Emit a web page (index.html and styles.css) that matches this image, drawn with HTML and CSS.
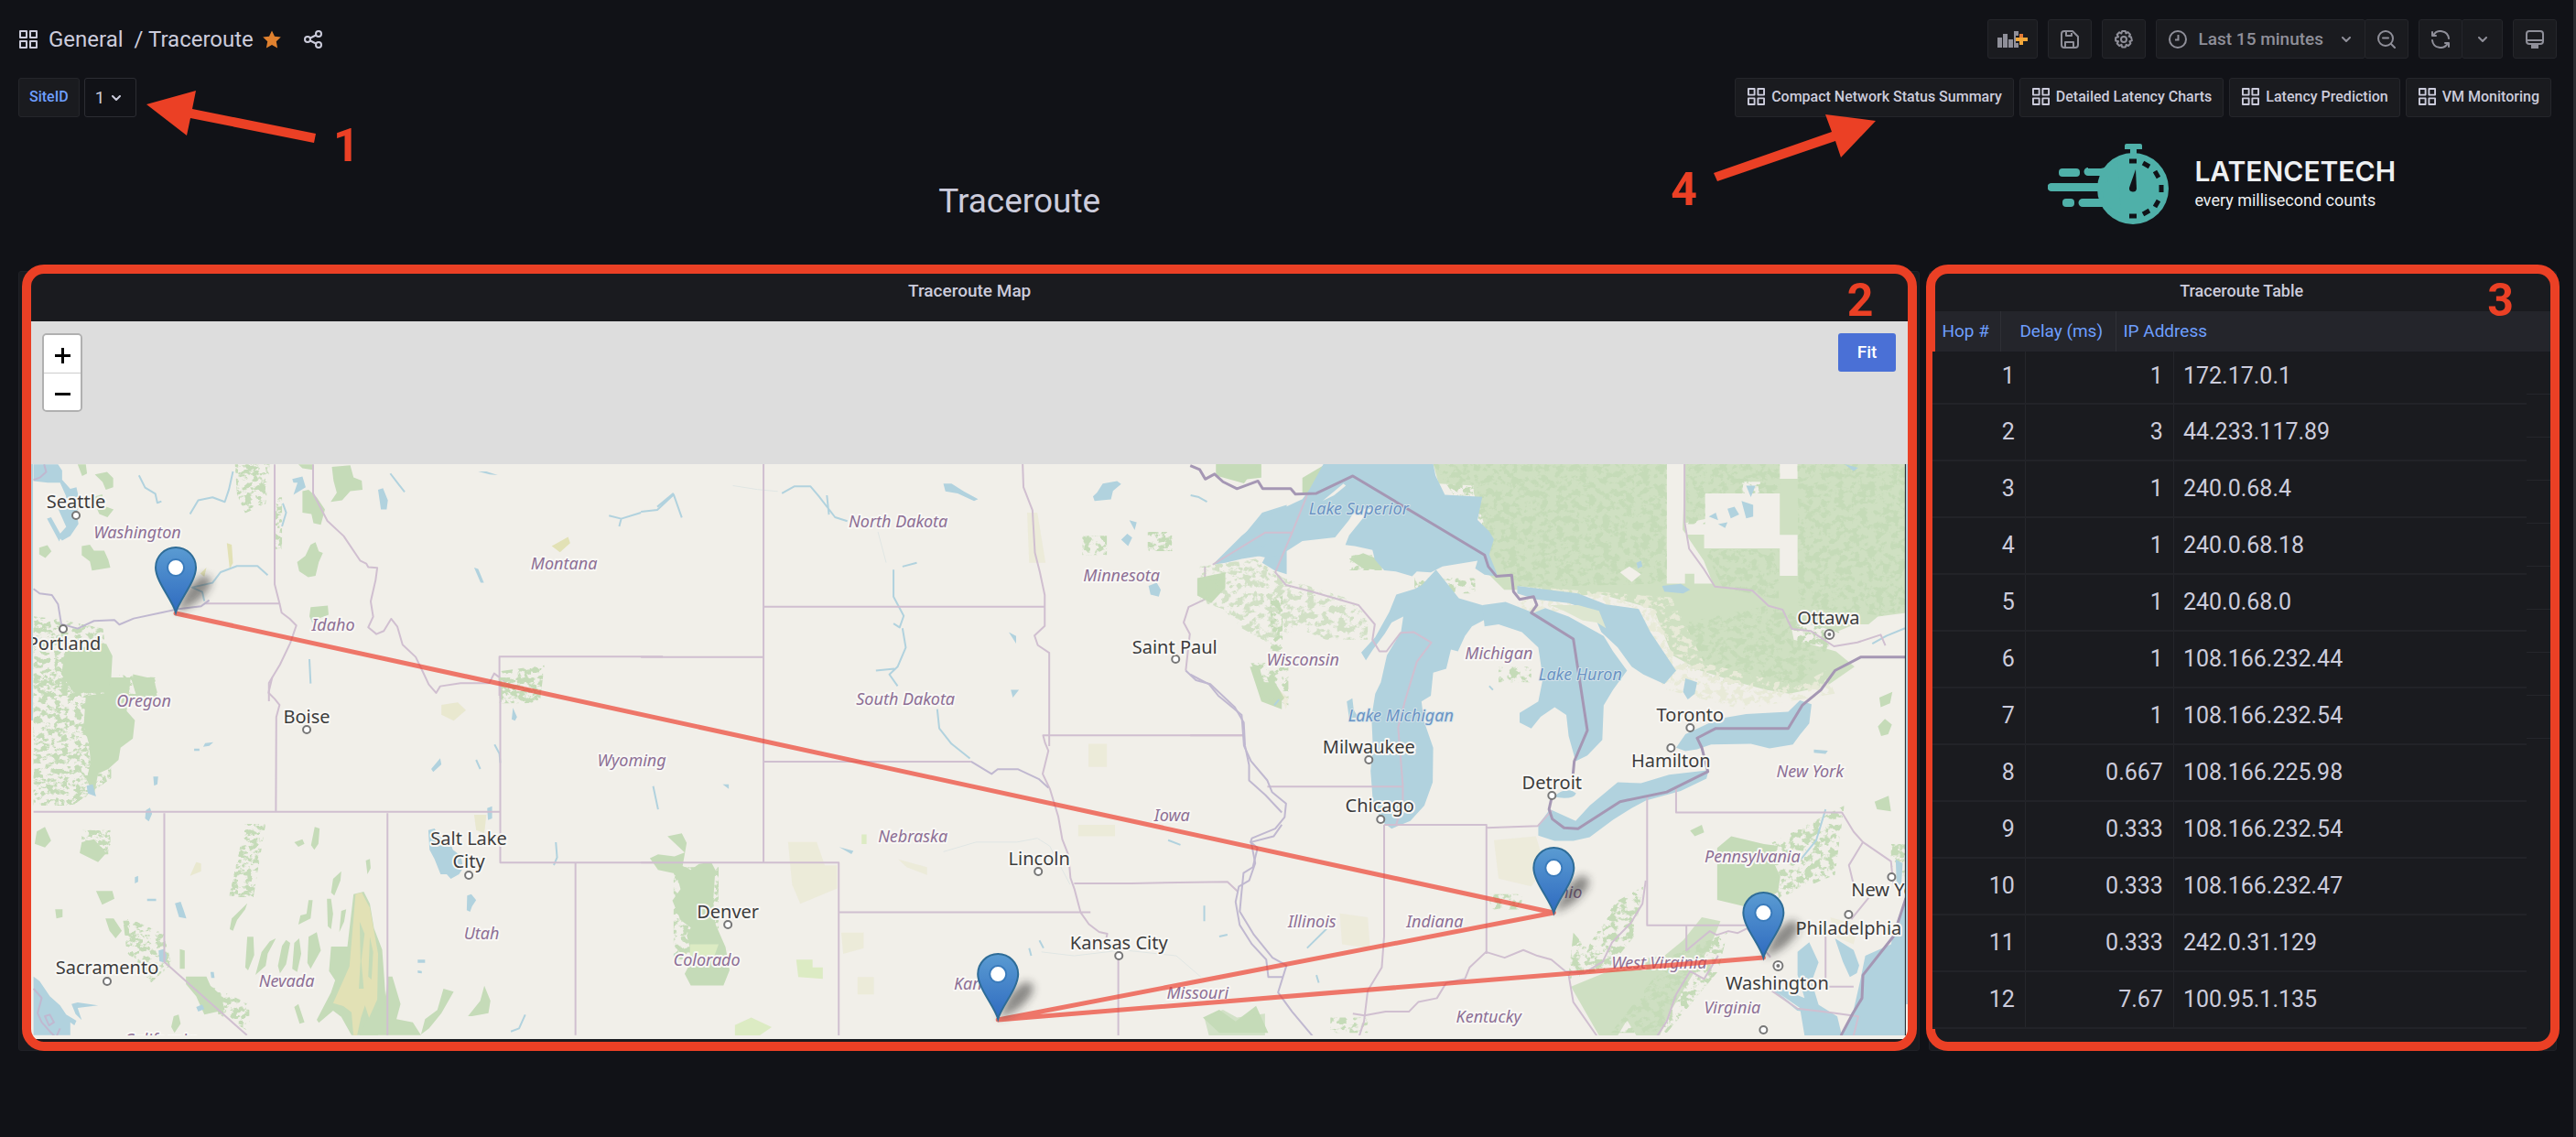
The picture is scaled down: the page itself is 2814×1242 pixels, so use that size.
FILE: index.html
```html
<!DOCTYPE html>
<html lang="en">
<head>
    <meta charset="UTF-8">
    <title>General / Traceroute</title>
    <link rel="stylesheet" href="styles.css">
</head>
<body>
    <svg class="defs" width="0" height="0" aria-hidden="true">
        <symbol id="apps" viewBox="0 0 20 20">
            <path d="M1 1h7v7H1zM12 1h7v7h-7zM1 12h7v7H1zM12 12h7v7h-7z" fill="none" stroke="currentColor" stroke-width="2" stroke-linejoin="round"/>
        </symbol>
        <symbol id="chevron" viewBox="0 0 10 6">
            <path d="M1 1l4 4 4-4" fill="none" stroke="currentColor" stroke-width="2" stroke-linecap="round" stroke-linejoin="round"/>
        </symbol>
    </svg>

    <header class="topbar">
        <nav class="breadcrumb">
            <svg class="icon" aria-hidden="true"><use href="#apps"/></svg>
            <a href="#">General</a>
            <a href="#" class="current">/ Traceroute</a>
            <button class="bare star" aria-label="Unmark favorite">
                <svg class="icon" viewBox="0 0 20 20"><path d="M10 0.5l3 6.2 6.8.9-5 4.7 1.3 7.2L10 16l-6.1 3.5 1.3-7.2-5-4.7L7 6.700z" fill="#e0812f"/></svg>
            </button>
            <button class="bare share" aria-label="Share dashboard">
                <svg class="icon" viewBox="0 0 20 20"><g fill="none" stroke="currentColor" stroke-width="2"><circle cx="4" cy="10" r="3"/><circle cx="16" cy="4" r="3"/><circle cx="16" cy="16" r="3"/><path d="M7 8.500l6-3M7 11.500l6 3"/></g></svg>
            </button>
        </nav>
        <div class="tools">
            <button class="tool add" aria-label="Add panel">
                <svg width="33" height="20" viewBox="0 0 33 20">
                    <path d="M0 8h5v11H0zM6 4h5v15H6zM12 10h5v9h-5zM18 1h5v5h-3v8h3v5h-5z" fill="#8f8f99"/>
                    <path d="M24 4h4v4h5v4h-5v4h-4v-4h-4V8h4z" fill="#f2a83b"/>
                    <path d="M24 4h4v4h-4z" fill="#e47a35"/>
                </svg>
            </button>
            <button class="tool" aria-label="Save dashboard">
                <svg class="icon" viewBox="0 0 20 20"><path d="M4 1h9l6 6v9a3 3 0 0 1-3 3H4a3 3 0 0 1-3-3V4a3 3 0 0 1 3-3zM6 1v5h6V3M5 19v-6h9v6" fill="none" stroke="currentColor" stroke-width="2" stroke-linejoin="round"/></svg>
            </button>
            <button class="tool" aria-label="Dashboard settings">
                <svg class="icon" viewBox="0 0 20 20"><g fill="none" stroke="currentColor" stroke-width="2" stroke-linejoin="round"><path d="M8.200 1h3.600l.6 2.400 2.100-1.300 2.500 2.500-1.300 2.100 2.300.8.9 3.900-2.500.8 1 2.300-2.500 2.500-2.200-1.200-.9 2.700H8.200l-.7-2.700-2.300 1.200-2.500-2.500L4 12.200l-2.900-.6V8.100L4 7.300 2.700 4.800l2.500-2.500 2.200 1.200z"/><circle cx="10" cy="10" r="3"/></g></svg>
            </button>
            <div class="group">
                <button class="tool time">
                    <svg class="icon" viewBox="0 0 20 20"><g fill="none" stroke="currentColor" stroke-width="2"><circle cx="10" cy="10" r="9"/><path d="M10.500 5v5.500H7"/></g></svg>
                    <span>Last 15 minutes</span>
                    <svg class="chevron" aria-hidden="true"><use href="#chevron"/></svg>
                </button>
                <button class="tool" aria-label="Zoom out time range">
                    <svg class="icon" viewBox="0 0 20 20"><g fill="none" stroke="currentColor" stroke-width="2" stroke-linecap="round"><circle cx="9" cy="9" r="8"/><path d="M15 15l4 4M6 8.500h6"/></g></svg>
                </button>
            </div>
            <div class="group">
                <button class="tool" aria-label="Refresh">
                    <svg class="icon" viewBox="0 0 20 20"><path d="M1 2v4h4M2 6a9 9 0 0 1 17 3M19 18v-4h-4M18 14A9 9 0 0 1 1 11" fill="none" stroke="currentColor" stroke-width="2" stroke-linecap="round" stroke-linejoin="round"/></svg>
                </button>
                <button class="tool narrow" aria-label="Refresh interval">
                    <svg class="chevron"><use href="#chevron"/></svg>
                </button>
            </div>
            <button class="tool" aria-label="Cycle view mode">
                <svg class="icon" viewBox="0 0 20 20"><path d="M4 1h12a3 3 0 0 1 3 3v8a3 3 0 0 1-3 3H4a3 3 0 0 1-3-3V4a3 3 0 0 1 3-3zM1 11h18M7 15v2M13 15v2M6 19h8M6 17h8" fill="none" stroke="currentColor" stroke-width="2" stroke-linejoin="round"/></svg>
            </button>
        </div>
    </header>

    <div class="submenu">
        <div class="variable">
            <label for="site">SiteID</label>
            <div class="picker">
                <select id="site"><option>1</option></select>
                <svg class="chevron" aria-hidden="true"><use href="#chevron"/></svg>
            </div>
        </div>
        <nav class="links">
            <a href="#"><svg class="icon" aria-hidden="true"><use href="#apps"/></svg>Compact Network Status Summary</a>
            <a href="#"><svg class="icon" aria-hidden="true"><use href="#apps"/></svg>Detailed Latency Charts</a>
            <a href="#"><svg class="icon" aria-hidden="true"><use href="#apps"/></svg>Latency Prediction</a>
            <a href="#"><svg class="icon" aria-hidden="true"><use href="#apps"/></svg>VM Monitoring</a>
        </nav>
    </div>

    <section class="banner">
        <h1>Traceroute</h1>
        <div class="brand">
            <!-- stopwatch with speed lines -->
            <svg width="132" height="89" viewBox="0 0 132 89" aria-hidden="true">
                <g fill="#4fb0a9">
                    <path d="M86 0h15a2 2 0 0 1 2 2v4h-6v6h-7V6h-6V2a2 2 0 0 1 2-2z"/>
                    <circle cx="93" cy="49" r="39"/>
                    <path d="M44 27h14q8-1 18-10l4 60q-10-8-20-8H38a4 4 0 0 1 0-9h19a4 4 0 0 0 0-8H4a4 4 0 0 1 0-9h58a4 4 0 0 0 0-8H44a4 4 0 0 1 0-9z"/>
                    <rect x="12" y="27" width="23" height="9" rx="4"/>
                    <rect x="16" y="60" width="13" height="9" rx="4"/>
                </g>
                <path d="M96 28l-7 20a4 4 0 0 0 8 1z" fill="#111217"/>
                <g fill="none" stroke="#111217" stroke-width="5">
                    <path d="M89 19h8M104 21l7 4M117 30l4 7M124 45v8M121 62l-4 7M111 73l-7 4M97 79h-8"/>
                </g>
            </svg>
            <div class="brand-text">
                <strong>LATENCETECH</strong>
                <span>every millisecond counts</span>
            </div>
        </div>
    </section>

    <main class="panels">
        <section class="panel map-panel">
            <h2>Traceroute Map</h2>
            <div class="map">
                <svg class="tiles" viewBox="34 351 2050 784" preserveAspectRatio="xMidYMid slice" role="img" aria-label="Map of traceroute hops">
                    <defs>
                        <filter id="speckle" x="0" y="0" width="1" height="1">
                            <feTurbulence type="fractalNoise" baseFrequency="0.060" numOctaves="4" seed="4" result="n"/>
                            <feColorMatrix in="n" values="0 0 0 0 0  0 0 0 0 0  0 0 0 0 0  9 0 0 0 -4.300" result="m"/>
                            <feComposite in="SourceGraphic" in2="m" operator="in"/>
                        </filter>
                        <filter id="soft" x="-50%" y="-50%" width="200%" height="200%"><feGaussianBlur stdDeviation="5"/></filter>
                        <linearGradient id="pin-fill" x1="0" y1="0" x2="0" y2="1">
                            <stop offset="0" stop-color="#5a9bd2"/>
                            <stop offset="1" stop-color="#2f6bc0"/>
                        </linearGradient>
                        <clipPath id="tile-area"><path d="M36 507h2045v624H36z"/></clipPath>
                        <g id="pin">
                            <path d="M0 0L14-28 28-40q12-2 10 10Q28-10 0 0z" fill="#222" opacity=".5" filter="url(#soft)"/>
                            <path d="M0 0C-4-14-22-34-22-49a22 22 0 0 1 44 0C22-34 4-14 0 0z" fill="url(#pin-fill)" stroke="#2e6c97" stroke-width="2"/>
                            <circle cy="-49" r="9" fill="#fff" stroke="#3a7bbb" stroke-width="2"/>
                        </g>
                    </defs>
                    <path d="M34 351h2050v156H34z" fill="#ddd"/>
                    <path d="M34 507h2050v628H34z" fill="#f1efe9"/>
                    <path d="M34 507h2v280h-2zM2081 507h3v590h-3z" fill="#b1d2de"/>
                    <g clip-path="url(#tile-area)">
                        <!-- northwest -->
                        <g transform="translate(0 280) scale(.4464 .3333)">
                            <g class="wood">
                                <path d="M730 682h35v18l-25-5zM812 690l45-5 8 40 20 10 2 30-30 5-20 30-28 5 15-30-8-40zM740 770l15-5 20 25 20 40-10 50-18-5-5-30-22-5zM760 945l12-8 8 30 10 5-10 30-8 45-18 5-22-20-5-30 20-20zM760 1150l42-5 2 30-30 15 8 12-15 8-10-30z"/>
                                <path d="M96 955l20-8 10 20-15 22-15-12zM200 950l20-5 10 20 25 0 10 30 5 25-45 10-5-30-20-20zM232 715l30-8 15 20 0 30-18 8-8-25zM225 790l25-10 8 40 20 10-15 25-20-10zM190 682h20l3 30-12 8z"/>
                                <path d="M160 1290l100-20 15 40-5 120H180l-30-60zM325 1370l50 15 10 60-50-10z"/>
                            </g>
                            <path class="wood" filter="url(#speckle)" d="M575 682h85l-10 130-50 30-20-60zM82 1180l60 10 110 30 20 220H82zM270 1370l110 10v70l-100-10z"/>
                            <path class="wood" filter="url(#speckle)" d="M1222 1360l110-20-10 110h-100zM670 790h20v170h-20z"/>
                            <path class="crop" d="M555 940l12 5 3 60-8 20zM490 1040l15-20-5 30zM1350 950l40-30 5 20-25 30z"/>
                            <path class="water" d="M82 682h60l10 20 0 30 20 30 15-5 10 60-10 20 5 40-20 40-20 15-10-15 20-30-20-60 20-40-15-45-30 0-35-5zM115 860l10-5 25 60-5 20zM925 765l12-5 12 40-3 30-14 0zM715 730l25-8 8 35-30 25 10-40-10 0zM1160 1020l10 5 14 45-8 0zM1170 705l20 0 28 12-20-2z"/>
                            <path class="river" d="M340 718l15 40 25 20 5 30 10-5M465 845l20-45 35-10 30 15 10-40 10-60M955 712l20 35 15 25M690 885l10-45-8-30M500 1130l-5-30-25-15 50-15 20-35 40-20 50 0 25 30M757 1320l3 80M1490 850l30 10 48-20M1515 885l5-25"/>
                            <path class="state" d="M672 682v393l12 63H500M684 1138l5 30 20 20 16 22-15 58-25 70-27 60v60M766 682v95l35 90 40 50 40 80 15 10 5 12 22 2-4 40-12 70 6 50-12 35 20 22 18-10 18-40 15 25 13 60 32 40 18 50 14 40 18 28 10-22 50-10 70 0 12-32 30 30M1222 1440V1312h400"/>
                            <path class="river-line" d="M82 1090l15 15 30 5 15 30 8 65 40 15 40-25 50-3 12 15 35-20 70-20 35-10 60-10 20-20M108 682l5 25-15 18-16 8"/>
                        </g>
                        <!-- southwest -->
                        <g transform="translate(0 740) scale(.4464 .3333)">
                            <g class="wood">
                                <path d="M210 60l55-10 5-50h50l-10 110 20 30-5 60-30 30-5 40-25 30-25 15-10 70-18-50 10-60-5-60-12-60zM320 0h55l10 50-50 15zM90 505l20-15 15 45-15 22-25-12zM200 540l30-10 30 45-20 30-45-30zM235 700h40l5 25-30 20zM258 790l20 0 20 40-15 25-15-25zM135 760l18 0 0 25-15 5z"/>
                                <path d="M770 490l12 5-3 50-10 20-8-15zM720 540l20-10 5 15-15 10zM895 600l10-5 2 30-8 20zM815 660l20-25-2 30-15 50-8-10zM605 740l-5 20-20 35-10 35-8-5 5-35zM800 725l10 0 5 50-5 50-8-10zM835 765l12-5-5 40-12 35zM755 730l10 0-5 60-30 20 5-30 15-5z"/>
                                <path d="M865 710l25-8 15 40 10 80 20 70 5 90 5 100-20 90H860l-25-60-20-20-35 40-5-10 35-90 10-40-15-30 5-80 40 0z"/>
                                <path d="M605 850l15 0 2 60-15 50-7-10zM640 900l20-35 15-10-20 50-5 40-25 30zM690 880l10-20 10 10-10 70-15 30-5-25zM720 870l12-15 5 50-10 60-12-10zM755 850l20-15 10 60-25 60-8-20zM720 1080l10-10 15 60-12 5zM950 980l10 0 20 90-10 50 40 10 20 42H880l20-60 40-40zM1085 1020l25 10-30 70-30 50-20 20 10-50 30-30zM1145 1110l30-50 10-50 15 50-5 40-40 10zM440 890l12 5 0 60-12 0zM455 980l30 0 20 0 10 30 25 30 10 50-50 15-20-60-25-40zM425 1110l12-5 5 30-15 30-8-20z"/>
                            </g>
                            <path class="wood" filter="url(#speckle)" d="M82 0h190v330l-90 90H82zM200 500h70v80h-70zM300 780l100 60 20 100-50 60-60-100zM480 990l130 80v90l-80-60zM600 480h50l-30 240h-60zM1222 0h95v85h-95z"/>
                            <path class="crop" d="M870 710l15-5 20 50 20 150-2 150-20 60-10-40-10 40-10 62h-8l-5-80-20-20-25-10 40-120z"/>
                            <path class="wood" d="M880 800l12 40-8 90 6 90-12 0 4-90zM905 850l8 50-4 90-8-10z"/>
                            <path class="crop" opacity=".5" d="M465 650l15-45 12 5 0 25zM1080 90l40-8 20 25-30 35-30-20zM1160 450l30 0-5 60-20-10z"/>
                            <path class="water" d="M1048 500l15-5 15 30 20 0 10 40 20 20 5 40-10 20-20 15-10-15-15 0-15-50-12-30zM388 895l12-5 8 20-3 25-15-5zM82 980l15 15 25 50 25 30 15 30 25 20-5 15-10-10v42H82zM428 740l14-5 8 30 6 25-18-5zM357 435l10-8 5 20-8 25-9-10zM1192 428l12-6v40l-10 5zM375 325h12l-2 25-8 5zM1055 300l22-35 3 20-20 25zM212 355l15-5 8 40-20-10zM1143 715l10-5 12 20-10 20-5 18-8-5zM175 1070l15-5 50 10-50 8 10 40-15-20zM480 1080l15-8 5 15-15 8zM360 725h22v8h-22zM502 215l20-3-10 12-15 3zM475 233h13v8h-13zM1255 100l10 30-5 12-8-5zM1022 925h18v10h-18zM1022 960l10 2v8l-10-2zM330 655l8-5 0 20-8 5zM515 965l8 0 2 20-8 0z"/>
                            <path class="river" d="M1250 1160l20-10 15-45M1360 540l3 50-8 25M1210 220l12 30 2 30M1165 270l10 30"/>
                            <path class="state" d="M666 0l-9 50 15 20 12 20-8 40-1 310M82 440h1140M1224 20v587h400M402 445v487l202 240M948 445v727M1408 607v565"/>
                            <path class="river-line" d="M82 1020l20 30-10 50 10 30 20 30 15 20 10-30M110 1110l10 30 12-10-10-25z"/>
                        </g>
                        <!-- plains -->
                        <g transform="translate(700 480) scale(.4464 .4209)">
                            <g class="wood">
                                <path d="M65 1030l35-8 12 25-10 60 20 10 20-15 30-5 10 20-5 80 5 60 25 60 10 60-15 40-80 0-15-30 20-40-15-60 10-20-25-20-20-50 20-30-10-40-45-10-20-30 20-10 40 5 25-10zM1408 64h110v35l-40 5-70-15zM1490 590l20 0 15 40 25 10 18 30v30l-50-20zM1375 1500l40-20 40 30 50-40 30 70h-120z"/>
                            </g>
                            <path class="wood" filter="url(#speckle)" d="M1080 250h60v50h-60zM1240 240h60v50h-60zM80 1110h110v240H80zM1540 400h30v150h-30z"/>
                            <path fill="#dcebc3" d="M380 1350h40v20h25v30l-60-5zM230 1520l40-20 50 25-30 22h-60zM120 1310h70l-10 30h-60zM540 1025h12v25h-12z"/>
                            <path class="crop" opacity=".3" d="M360 1045l70 0 20 60 30 0v60l-90 40-20-50zM1095 790h45v60h-45zM1070 1000h90v30h-90zM490 1280h55v40l-50 15zM530 1395h40v45h-40zM945 190h25l20 130h-40zM630 1090l70 20v20l-50-20z"/>
                            <path class="water" d="M1130 115l35-7 10 8-20 18-5 22-40 4-4-12 10-10zM1242 380l20-8 10 18-5 18-20-5zM1175 260l15-15 12 10-10 22zM1195 210l18 5-5 20zM740 115l20 0 30 20 35 20-10 5-40-20-30-5zM1400 325L1470 255 1520 190l60-20v180l-30-10-30-20 10-20-60 10-40 10zM200 895h15l0 12zM485 1058l35 10-5 8zM900 500l18 10 0 20zM905 650l20 0-15 20z"/>
                            <path class="river" d="M345 140l30-18 40 0 20 25 40 55 30 10M455 145l5 50M0 188l40-5 40-40 20 60M80 140l-40 35M618 338l0 70 25 50-10 30-15-10M640 490l8 50-20 50-20 20 20 30M575 600l45-5M725 700l5 50 30 40 45 38M30 900l12 60M640 330l35-10M1345 145l20 5 20 12M1290 1040l30 12M950 1320l5 20M975 1300l10 20M1415 1290l20-5"/>
                            <path class="thin-river" d="M225 120l60 10 50 5M580 240l20 80M740 1070l80-25 100 0 50-10 30 20 50 100M980 1330l80 10 120-15 130 15 60 55"/>
                            <path class="state" d="M300 64v1034M300 434h686M0 565h300M300 836h508M0 1098h484v449M484 1227h616M934 64l2 60 22 60 6 110 12 50 12 60 0 80-25 25 8 25 28 20v242M1476 768H984l5 20 8 20-14 60 18 40 20 70 10 60 15 40 5 60 10 30 15 60 20 30 25 20 20 5-3 15-15 20M1060 1152h140l235-4 25 25M1168 1340v207M1380 330v85l-40 20-12 40 15 30-10 95"/>
                            <path class="river-line" d="M808 836l50 32 15-12 50 0 50 25 24 23M1333 600l25 25 35 10 60 60 22 40 3 60 10 50 0 40 40 38 40 45M1568 1000l-20 30-55 15 10 55-15 45-25 15-8 40 10 60 30 50 35 40 5 45 35 0"/>
                        </g>
                        <!-- great lakes and the east -->
                        <g transform="translate(1300 480) scale(.5102 .4209)">
                            <path fill="#cfe0c2" d="M520 64h1012v386l-60 10-20 20-30 0-40 20-60-25-35 15 5 30 90 30 40 40-60 50-80 20-50-10-60-20-80-30-60-40-40-120-60-20-60-20-60 10-80-20-60 0-50-60-10-60 20-40-25-90 0-20-75-5z"/>
                            <path fill="#f1efe9" d="M1020 64h38v40l-4 130 45 80 20 60h-40v-25h-20v25h-39v-120zM1102 140h80v-30h38v30h42v108h38v106h-38v-71h-162v-36h-40v-30l42-10zM1262 64h38v38h-38z"/>
                            <path class="wood" filter="url(#speckle)" d="M520 64h500v310l-320 10-60-100zM1062 64h200v76h-160v80h-40zM1300 64h232v400l-230-30zM1100 285h160v130l-120-30zM1040 480l200-50 150 70-80 130-150 10-120-60z"/>
                            <path fill="#e8ead8" filter="url(#speckle)" d="M700 380l330 30 70 170 200 60 60-40 20 60-200 40-160-50-60-90-80-130-180 30z"/>
                            <path fill="#f1efe9" d="M920 345l20-15 25 20-20 20z"/>
                            <g class="wood">
                                <path d="M55 64h90l-30 50-60-20zM240 100l50-36-10 80-40-5zM130 580l18 10 8 40 25 0 20 40-30 10-20-30-10-40zM15 360l60-15 0 40-30 40-30-20zM340 310l30-15 40 20 0 25-40-5zM1128 1060l30-30 70 20 30 5-10 40 15 40-5 40-60 40-70-20zM1475 670l28-15-5 30-20 10zM1472 745l15-20 15 15-8 25-15 5zM1465 940l30-15 5 40-30-5zM1070 1015l25-15 5 20-20 10z"/>
                                <path opacity=".8" d="M815 1420l80-40 60-30 60-10 40-40 40-60 40 10-20 60-60 120-30 60-20 57h-50l-20-40-20 40h-40z"/>
                                <path d="M30 1500l40-20 30 20 60-10v57H40z" opacity=".7"/>
                            </g>
                            <path class="wood" opacity=".7" filter="url(#speckle)" d="M20 330l120-20 60 50 130 50 50 50 0 60-90 0-60-30-60 40-60-40-40-50-50-20z"/>
                            <path class="wood" filter="url(#speckle)" d="M130 580h80v110l-60-30zM340 300h70v40h-70zM480 360h130v40h-130zM1240 1050l160-100-20 180-120 60zM910 1200l60-40-20 130-60 90-80 20zM1030 1340l120-60-20 100-110 160h-120zM640 1180h70v40h-70zM820 1280l50 70-60 40zM660 590h70v40h-70zM300 1500h80v40h-80zM1500 1050h30v90h-30z"/>
                            <path class="crop" opacity=".25" d="M650 1040l90-10 20 80-30 50-70-20zM320 1230l60 10 5 80-60-10zM190 650l20 20-5 30zM1370 1240l60 20-10 50-40-20z"/>
                            <path class="water" d="M48 325l62-75 50-50 80-45 15-25 30-66h235l5 30 20 50 80 5-10 60 25 30 10 20-10 40 15 45 3 12-28-5-20-16 5-20-75 15-25 15-30-2-10 12-35-12-25-3-20-28-5-25-38-10-20-3 8-25 40-60 20-5-25-5-25 10-10 20-30 45-70 10-45 35-32 8-20-5 20-30z"/>
                            <path fill="#f1efe9" d="M283 160l45-45 5 5-25 25z"/>
                            <path class="water" d="M575 412l50 18 18 30-40 25-15 25-15 40-15-5-10 50-28 10-5 60-20 15 5 50 20 70-1 90-18 60-30 40-40 20-22-20-18-50-5-80 5-60-3-80 8-60 12-30 13-70 30-60 5-40-25 15-15 30-25 40-15 28-10-20 30-40 30-65 15-45 40-15 15-10 30-40z"/>
                            <path class="water" d="M625 430l50-8 60 28 25-12 50 22 45 30 30 20 20 40 30 50-30 50-20 40-3 90-32 40-25 15-15-65-5-55-25-20-30 25-20 30-25-15 0-25 40-30 10-60-10-80-35-40-50-20-30 5zM700 380l130 20 60 28 70 12 25 60 55 100-25 35-45-25-25-20-30-50-35-40-20-55-50-20-70-10-40-15z"/>
                            <path class="water" d="M1060 620l25 10-5 30-15 15-10-20zM1010 380l40-5 20 15-15 10-40-5z"/>
                            <path fill="#dde6d0" d="M770 430l60 0 45 15 15 45-20-15-30-5-40-25z"/>
                            <path class="water" d="M745 1000l25-40 55 30 30-40 60-60 50 2 60-22 85-12-5 22-55 32-75 25-30 20-40 30-50 45-35 10-40 0-35-14zM778 928q25-30 48-10-5 18-48 10zM1040 800l20-35 70-40 60-12 90-6 25-30 25 10-5 50-20 30-15 25-50 10-40-12-85 2-30 12-25 5zM1335 805l30 3-5 8-25-3z"/>
                            <path class="water" d="M1532 1190l-22 70-10 50-55 30-10 60-15 80-25 67h137zM1380 1295l40 30 12 40-5 20-15 10-15-40zM1325 1305l-25 25 0 60 15 60-30-15-30-20-10 10 60 50 10 72h80l-10-50-40-30-15-60 15-50zM1510 1090l15 10-3 60-10-10z"/>
                            <path class="water" d="M335 680l12-8 3 30 10 20-20 0zM955 320l10-5 3 15-10 5zM1110 200l15-10 5 20zM1190 120l20 0-10 30zM1150 180l15-5 10 20-18 10zM1180 160l25 10 0 30-15 5zM1130 220l20-5-5 15zM1400 64l30 10-10 8z"/>
                            <path class="river" d="M270 1390l5 20M30 1210l0 40M1460 530l30-20 40-20M1240 1420l60 60 60 10M180 690l10-15M640 640l8 10M1300 1100l40-60 20-80M300 1260l-50 60"/>
                            <path class="state" d="M48 325L160 242h58l32-97M218 242l-36 103 23 33 55 17 100 35 35 50-5 40 15 30h15l30-48 28-2 38 27-31 50-25 100-15 70 10 151v45l-15 60M165 901h290M0 768h115M415 1000v290l-5 80-30 60-8 80-10 37M415 1000h219v335M634 1008l110-5 30-40M978 925v336h287M1040 905v63h355l25 50 20 27-30 60 10 50 35 30-40 60M1440 1045l60 50 5 60M1360 1265v155h60M1062 1261v65l30-30 20-20 15 10 25-10 20 5 20-12 20 30 30 45M1130 1340l-30 60-30-20-30 60-20 70-20 37M1058 64v150l10 70 30 50 25 48 80 10 35 40 30 10 20 50 40 5 50 40 50-10 50-20 10 28M810 1390l10 70 50 87"/>
                            <path class="river-line" d="M0 610l40 25 20 30 50 50 5 80 15 40 35 50 10 30 30 30-3 35-20 30-50 25-3 10 15 15-10 50-20 15-5 60-3 40 30 60 40 60 30 20-18 70 30 50 45 65"/>
                            <path class="state" d="M975 1145l-7 60-25 50-40 50-20 50-40 30-40-5-30-30-30-10-30-15-40 20-40-15-35 40-10 30-40 10-20 40-40 10-20 25-50 0-45 10-25-5M1420 1547l10-50-60-10-70-10-60-50"/>
                            <path class="country" d="M0 68l20 10 12 25 20-13 18 20 30 18 45-20 10 20 60 0 10 14 45-2 78-45 282 205 8 30 17 25 33-3 4 43 13 20 30-7 7 22-12 20 90 68 30 237-28 80-5 65M775 922l-7 38 7 25 25 23 30 2 90-70 100-25 88-53-13-62-10-25 40-25h155l30-60 40-40 30-50 55-35h97"/>
                            <path class="country" d="M1532 1190l-27 100-65 100-2 60-20 40-25 57"/>
                        </g>
                        <g class="town-dots">
                            <circle cx="83" cy="563" r="4"/><circle cx="69" cy="687" r="4"/><circle cx="335" cy="797" r="4"/><circle cx="512" cy="956" r="4"/><circle cx="117" cy="1072" r="4"/><circle cx="795" cy="1010" r="4"/><circle cx="1134" cy="952" r="4"/><circle cx="1222" cy="1044" r="4"/><circle cx="1284" cy="720" r="4"/><circle cx="1495" cy="830" r="4"/><circle cx="1508" cy="895" r="4"/><circle cx="1695" cy="869" r="4"/><circle cx="1846" cy="795" r="4"/><circle cx="1825" cy="817" r="4"/><circle cx="2066" cy="958" r="4"/><circle cx="2019" cy="999" r="4"/><circle cx="1926" cy="1125" r="4"/>
                            <circle cx="1998" cy="693" r="5"/><circle cx="1998" cy="693" r="1"/><circle cx="1942" cy="1055" r="5"/><circle cx="1942" cy="1055" r="1"/>
                        </g>
                        <g class="towns">
                            <text x="83" y="555">Seattle</text>
                            <text x="70" y="710">Portland</text>
                            <text x="335" y="790">Boise</text>
                            <text x="512" y="923">Salt Lake</text>
                            <text x="512" y="948">City</text>
                            <text x="117" y="1064">Sacramento</text>
                            <text x="795" y="1003">Denver</text>
                            <text x="1135" y="945">Lincoln</text>
                            <text x="1222" y="1037">Kansas City</text>
                            <text x="1283" y="714">Saint Paul</text>
                            <text x="1495" y="823">Milwaukee</text>
                            <text x="1507" y="887">Chicago</text>
                            <text x="1695" y="862">Detroit</text>
                            <text x="1846" y="788">Toronto</text>
                            <text x="1825" y="838">Hamilton</text>
                            <text x="1997" y="682">Ottawa</text>
                            <text x="2066" y="979">New York</text>
                            <text x="2019" y="1021">Philadelphia</text>
                            <text x="1941" y="1081">Washington</text>
                        </g>
                        <g class="states">
                            <text x="150" y="588">Washington</text>
                            <text x="616" y="622">Montana</text>
                            <text x="364" y="689">Idaho</text>
                            <text x="157" y="772">Oregon</text>
                            <text x="690" y="837">Wyoming</text>
                            <text x="526" y="1026">Utah</text>
                            <text x="313" y="1078">Nevada</text>
                            <text x="175" y="1142">California</text>
                            <text x="981" y="576">North Dakota</text>
                            <text x="989" y="770">South Dakota</text>
                            <text x="1225" y="635">Minnesota</text>
                            <text x="1280" y="897">Iowa</text>
                            <text x="997" y="920">Nebraska</text>
                            <text x="772" y="1055">Colorado</text>
                            <text x="1070" y="1081">Kansas</text>
                            <text x="1308" y="1091">Missouri</text>
                            <text x="1423" y="727">Wisconsin</text>
                            <text x="1637" y="720">Michigan</text>
                            <text x="1977" y="849">New York</text>
                            <text x="1914" y="942">Pennsylvania</text>
                            <text x="1892" y="1107">Virginia</text>
                            <text x="1626" y="1117">Kentucky</text>
                            <text x="1812" y="1058">West Virginia</text>
                            <text x="1567" y="1013">Indiana</text>
                            <text x="1433" y="1013">Illinois</text>
                            <text x="1709" y="981">Ohio</text>
                        </g>
                        <g class="states lakes">
                            <text x="1484" y="562">Lake Superior</text>
                            <text x="1726" y="743">Lake Huron</text>
                            <text x="1530" y="788">Lake Michigan</text>
                        </g>
                    </g>
                    <path d="M2081 507v624" stroke="#1a1b1f"/>
                    <path class="route" d="M192 670L1697 997 1090 1114 1926 1046"/>
                    <use href="#pin" x="192" y="669"/>
                    <use href="#pin" x="1697" y="997"/>
                    <use href="#pin" x="1926" y="1046"/>
                    <use href="#pin" x="1090" y="1113"/>
                </svg>
                <div class="zoom">
                    <button aria-label="Zoom in"><svg width="17" height="17" viewBox="0 0 17 17"><path d="M8.500 0v17M0 8.500h17" stroke="#000" stroke-width="3"/></svg></button>
                    <button aria-label="Zoom out"><svg width="17" height="17" viewBox="0 0 17 17"><path d="M0 8.500h17" stroke="#000" stroke-width="3"/></svg></button>
                </div>
                <button class="fit">Fit</button>
            </div>
            <div class="frame"></div>
            <span class="mark mark-map">2</span>
        </section>

        <section class="panel table-panel">
            <h2>Traceroute Table</h2>
            <div class="head" id="hop-columns">
                <span>Hop #</span><span>Delay (ms)</span><span>IP Address</span>
            </div>
            <div class="frame"></div>
            <div class="rows">
                <table aria-labelledby="hop-columns">
                    <colgroup><col class="hop"><col class="delay"><col></colgroup>
                    <tbody>
                        <tr><td>1</td><td>1</td><td>172.17.0.1</td></tr>
                        <tr><td>2</td><td>3</td><td>44.233.117.89</td></tr>
                        <tr><td>3</td><td>1</td><td>240.0.68.4</td></tr>
                        <tr><td>4</td><td>1</td><td>240.0.68.18</td></tr>
                        <tr><td>5</td><td>1</td><td>240.0.68.0</td></tr>
                        <tr><td>6</td><td>1</td><td>108.166.232.44</td></tr>
                        <tr><td>7</td><td>1</td><td>108.166.232.54</td></tr>
                        <tr><td>8</td><td>0.667</td><td>108.166.225.98</td></tr>
                        <tr><td>9</td><td>0.333</td><td>108.166.232.54</td></tr>
                        <tr><td>10</td><td>0.333</td><td>108.166.232.47</td></tr>
                        <tr><td>11</td><td>0.333</td><td>242.0.31.129</td></tr>
                        <tr><td>12</td><td>7.67</td><td>100.95.1.135</td></tr>
                    </tbody>
                </table>
                <div class="ticks"></div>
            </div>
            <span class="mark mark-table">3</span>
        </section>
    </main>

    <!-- callouts -->
    <div class="callout callout-site">
        <svg width="186" height="58" viewBox="160 99 186 58" aria-hidden="true"><path d="M160 114l54-15-4 20 135 27-2 10-135-27-4 19z"/></svg>
        <span class="mark">1</span>
    </div>
    <div class="callout callout-links">
        <svg width="178" height="74" viewBox="1873 125 178 74" aria-hidden="true"><path d="M2050 132l-55-7 7 19-129 45 4 9 129-44 6 18z"/></svg>
        <span class="mark">4</span>
    </div>
</body>
</html>
```
FILE: styles.css
```css
* {
    box-sizing: border-box;
}

body {
    position: relative;
    margin: 0;
    min-height: 100vh;
    padding: 21px 18px 0 20px;
    border-right: 3px solid #2b2c31;
    background: #111217;
    color: #ccccdc;
    font-family: Roboto, "Liberation Sans", sans-serif;
}

a {
    color: inherit;
    text-decoration: none;
}

button,
select {
    font: inherit;
    color: inherit;
}

h1,
h2 {
    margin: 0;
    font-weight: 400;
}

.defs {
    position: absolute;
}

.icon {
    display: block;
    width: 20px;
    height: 20px;
}

.chevron {
    display: block;
    width: 10px;
    height: 6px;
}

/* top bar */
.topbar,
.submenu,
.tools,
.group,
.breadcrumb,
.variable,
.links {
    display: flex;
    align-items: center;
}

.topbar,
.submenu {
    justify-content: space-between;
}

.breadcrumb {
    padding-left: 1px;
    font-size: 24px;
}

.breadcrumb a {
    margin-left: 12px;
}

.bare {
    padding: 0;
    border: 0;
    background: none;
}

.star {
    margin-left: 10px;
}

.share {
    margin-left: 25px;
}

.tools {
    gap: 11px;
}

.tool {
    display: flex;
    align-items: center;
    justify-content: center;
    width: 48px;
    height: 43px;
    padding: 0;
    border: 1px solid #25262b;
    border-radius: 3px;
    background: #1a1b1f;
    color: #8f8f99;
}

.tool.add {
    width: 55px;
}

.tool.narrow {
    width: 45px;
}

.tool.time {
    width: auto;
    padding: 0 15px 0 13px;
    font-size: 19px;
    font-weight: 500;
}

.time span {
    margin: 0 20px 0 13px;
}

.group .tool + .tool {
    margin-left: -1px;
}

.submenu {
    margin-top: 21px;
    padding-right: 6px;
    font-size: 16px;
    font-weight: 500;
}

.variable {
    gap: 5px;
}

.variable label {
    padding: 0 11px;
    height: 43px;
    line-height: 40px;
    border: 1px solid #25262b;
    border-radius: 3px;
    background: #1a1b1f;
    color: #6e9fff;
}

.picker {
    display: flex;
    align-items: center;
    height: 43px;
    padding: 0 16px 0 11px;
    border: 1px solid #2c2d33;
    border-radius: 3px;
}

.picker select {
    width: 18px;
    padding: 0;
    border: 0;
    background: #111217;
    font-size: 19px;
    font-weight: 400;
    appearance: none;
}

.links {
    gap: 6px;
}

.links a {
    display: flex;
    align-items: center;
    height: 43px;
    padding: 0 12px 2px 13px;
    border: 1px solid #25262b;
    border-radius: 3px;
    background: #1a1b1f;
}

.links .icon {
    width: 19px;
    height: 19px;
    margin-right: 7px;
}

/* title and logo */
.banner {
    display: grid;
    grid-template-columns: 19fr 5fr;
    gap: 10px;
    height: 168px;
}

.banner h1 {
    padding-top: 68px;
    font-size: 37px;
    line-height: 48px;
    text-align: center;
}

.brand {
    display: flex;
    align-items: flex-start;
    gap: 28px;
    padding: 29px 0 0 20px;
}

.brand-text {
    display: grid;
    gap: 4px;
    padding-top: 12px;
    color: #eef0f2;
    font-family: Inter, sans-serif;
    font-size: 30px;
    line-height: 36px;
}

.brand-text strong {
    font-weight: 600;
}

.brand-text span {
    font-family: Roboto, sans-serif;
    font-size: 18px;
    line-height: 20px;
}

/* panels */
.panels {
    display: grid;
    grid-template-columns: 3.03fr 1fr;
    gap: 10px;
}

.panel {
    position: relative;
    padding: 0 13px 12px 14px;
    border: 1px solid #202127;
    border-radius: 3px;
    background: #1a1b1f;
}

.panel h2 {
    height: 43px;
    font-size: 19px;
    font-weight: 500;
    line-height: 41px;
    text-align: center;
}

.frame {
    position: absolute;
    inset: -8px 2px -1px 3px;
    border: 10px solid #eb4025;
    border-radius: 24px;
    pointer-events: none;
}

.mark {
    color: #eb4025;
    font-size: 50px;
    font-weight: 700;
    line-height: 50px;
}

.mark-map,
.mark-table {
    position: absolute;
    top: 6px;
}

.mark-map {
    right: 50px;
}

.mark-table {
    right: 46px;
}

.map {
    position: relative;
    margin: 11px -1px 0;
}

.tiles {
    display: block;
    width: 100%;
    height: 784px;
}

.water {
    fill: #b1d2de;
}

.wood {
    fill: #c5dbb8;
}

.crop {
    fill: #e2e1b5;
}

.river,
.thin-river,
.state,
.river-line,
.country {
    fill: none;
    stroke-linejoin: round;
    stroke-width: 2;
}

.tiles path {
    vector-effect: non-scaling-stroke;
}

.river {
    stroke: #b1d2de;
}

.thin-river {
    stroke: #e0e6e4;
    stroke-width: 1;
}

.state {
    stroke: #d0bfd0;
}

.river-line {
    stroke: #c0b8d0;
}

.country {
    stroke: #a597b4;
    stroke-width: 3;
}

.route {
    fill: none;
    stroke: #ee4434;
    stroke-width: 5;
    stroke-linecap: round;
    stroke-linejoin: round;
    opacity: 0.7;
}

.town-dots {
    fill: #fff;
    stroke: #777;
    stroke-width: 2;
}

.towns,
.states {
    font-family: "Noto Sans", sans-serif;
    font-size: 20px;
    text-anchor: middle;
    fill: #3c3c3c;
    stroke: #f8f7f4;
    stroke-width: 4;
    stroke-linejoin: round;
    paint-order: stroke;
}

.states {
    font-size: 18px;
    font-style: italic;
    fill: #8d6f95;
}

.lakes {
    fill: #6a93c4;
    stroke: #d4e3e9;
    stroke-width: 2;
}

.zoom {
    position: absolute;
    top: 13px;
    left: 12px;
    border: 2px solid #b0b0b0;
    border-radius: 5px;
    overflow: hidden;
}

.zoom button {
    display: flex;
    align-items: center;
    justify-content: center;
    width: 40px;
    height: 41px;
    padding: 4px 0 0;
    border: 0;
    background: #fff;
}

.zoom button + button {
    border-top: 1px solid #ccc;
}

.fit {
    position: absolute;
    top: 13px;
    right: 13px;
    padding: 0 21px;
    border: 0;
    border-radius: 3px;
    background: #4a70d6;
    color: #fff;
    font-size: 19px;
    font-weight: 500;
    line-height: 42px;
}

/* hop table */
.table-panel {
    padding: 0 6px 23px 3px;
}

.table-panel h2 {
    font-size: 18px;
}

.table-panel .frame {
    inset: -8px -4px -1px -4px;
}

.head {
    display: flex;
    margin-left: 3px;
    background: #24252b;
    color: #6e9fff;
    font-size: 19px;
    line-height: 44px;
}

.head span {
    width: 72px;
    padding-left: 7px;
    border-right: 1px solid #2f3036;
}

.head span:nth-child(2) {
    width: 126px;
    padding-left: 20px;
}

.head span:last-child {
    width: auto;
    border: 0;
}

.rows {
    position: relative;
    display: flex;
    background: #1a1b1f;
}

.rows table {
    flex: 1;
    border-collapse: collapse;
    table-layout: fixed;
    font-size: 25px;
}

.hop {
    width: 101px;
}

.delay {
    width: 162px;
}

.rows td {
    height: 62px;
    padding: 0 11px;
    border-bottom: 2px solid #222328;
    border-right: 1px solid #25262b;
    line-height: 30px;
    text-align: right;
}

.rows tr:first-child td {
    height: 57px;
    padding-bottom: 2px;
}

.rows td:last-child {
    padding-left: 10px;
    border-right: 0;
    text-align: left;
}

.ticks {
    width: 26px;
    height: 468px;
    background: repeating-linear-gradient(#1a1b1f 0, #1a1b1f 46px, #25262b 46px, #25262b 47px);
}

/* callouts */
.callout {
    position: absolute;
    display: flex;
    fill: #eb4025;
}

.callout-site {
    top: 99px;
    left: 160px;
    gap: 18px;
}

.callout-site .mark {
    padding-top: 35px;
}

.callout-links {
    top: 125px;
    right: 761px;
    flex-direction: row-reverse;
    gap: 18px;
}

.callout-links .mark {
    padding-top: 57px;
}
```
